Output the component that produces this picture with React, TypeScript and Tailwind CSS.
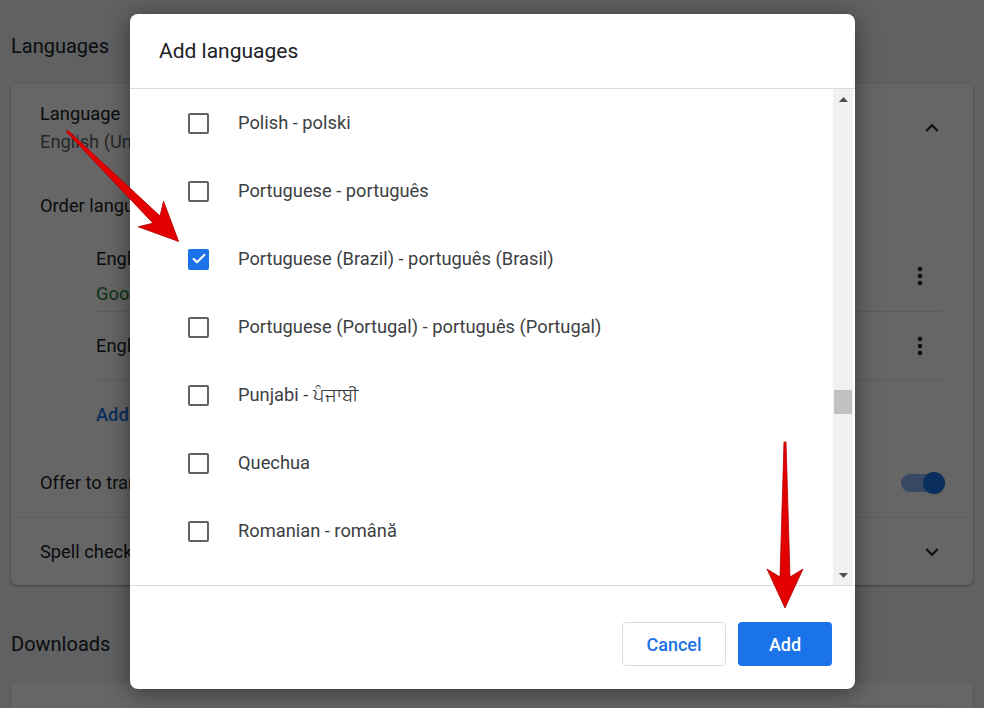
import { Check } from 'lucide-react';

const LANGS = [
  { label: 'Polish - polski', checked: false },
  { label: 'Portuguese - português', checked: false },
  { label: 'Portuguese (Brazil) - português (Brasil)', checked: true },
  { label: 'Portuguese (Portugal) - português (Portugal)', checked: false },
  { label: 'Punjabi - ਪੰਜਾਬੀ', checked: false },
  { label: 'Quechua', checked: false },
  { label: 'Romanian - română', checked: false },
];

function ChevronUp() {
  return (
    <svg width="26" height="26" viewBox="0 0 24 24" fill="#202124">
      <path d="M12 8l-6 6 1.41 1.41L12 10.83l4.59 4.58L18 14z" />
    </svg>
  );
}

function ChevronDown() {
  return (
    <svg width="26" height="26" viewBox="0 0 24 24" fill="#202124">
      <path d="M16.59 8.59L12 13.17 7.41 8.59 6 10l6 6 6-6z" />
    </svg>
  );
}

function MoreVert() {
  return (
    <svg width="28" height="28" viewBox="0 0 24 24" fill="#202124">
      <circle cx="12" cy="6" r="2" />
      <circle cx="12" cy="12" r="2" />
      <circle cx="12" cy="18" r="2" />
    </svg>
  );
}

function Checkbox({ checked }: { checked: boolean }) {
  if (checked) {
    return (
      <div className="w-[21px] h-[21px] rounded-[2px] bg-[#1a73e8] flex items-center justify-center shrink-0">
        <Check size={16} strokeWidth={3.2} className="text-white" />
      </div>
    );
  }
  return <div className="w-[21px] h-[21px] rounded-[2px] border-2 border-[#5f6368] shrink-0" />;
}

function SettingsPage() {
  return (
    <div className="px-[11px]">
      <div className="h-[84px] pt-[33px] text-[20px] leading-[26px] text-[#202124]">Languages</div>

      <div className="rounded-[6px] bg-white shadow-[0_1px_2px_rgba(60,64,67,0.3),0_1px_3px_1px_rgba(60,64,67,0.15)] text-[18.3px] text-[#202124]">
        <div className="h-[88px] flex items-center justify-between pl-[29px] pr-[28px]">
          <div className="leading-[28px]">
            <div>Language</div>
            <div className="text-[#5f6368]">English (United States)</div>
          </div>
          <ChevronUp />
        </div>

        <div className="h-[68px] flex items-center pl-[29px]">Order languages based on your preference</div>

        <div className="ml-[85px] mr-[30px]">
          <div className="h-[71px] flex items-center justify-between pr-[9px]">
            <div className="leading-[35px]">
              <div>English (United States)</div>
              <div className="text-[#188038]">Google Chrome is displayed in this language</div>
            </div>
            <MoreVert />
          </div>
          <div className="h-[69px] flex items-center justify-between pr-[9px] border-t border-[#e8eaed]">
            <div>English</div>
            <MoreVert />
          </div>
          <div className="h-[68px] flex items-center border-t border-[#e8eaed] text-[#1a73e8] font-medium">
            Add languages
          </div>
        </div>

        <div className="h-[69px] flex items-center justify-between pl-[29px] pr-[28px]">
          <div>Offer to translate pages that aren't in a language you read</div>
          <div className="w-[44px] h-[18px] rounded-full bg-[#8ab4f8] flex items-center justify-end">
            <div className="w-[22px] h-[22px] rounded-full bg-[#1a73e8] shadow" />
          </div>
        </div>

        <div className="h-[68px] flex items-center justify-between pl-[29px] pr-[28px] border-t border-[#e8eaed]">
          <div>Spell check</div>
          <ChevronDown />
        </div>
      </div>

      <div className="h-[98px] pt-[46px] text-[20px] leading-[26px] text-[#202124]">Downloads</div>

      <div className="h-[120px] rounded-[6px] bg-white shadow-[0_1px_2px_rgba(60,64,67,0.3)] flex items-start justify-between pl-[29px] pr-[30px] pt-[22px] text-[18.3px] text-[#202124]">
        <div className="pt-[4px]">Location</div>
        <div className="w-[108px] h-[40px] rounded-[4px] border border-[#dadce0] flex items-center justify-center text-[#1a73e8] font-medium">
          Change
        </div>
      </div>
    </div>
  );
}

function ScrollArrow({ up }: { up: boolean }) {
  return (
    <div className="h-[20px] flex items-center justify-center">
      <svg width="9" height="5" viewBox="0 0 9 5" fill="#505050">
        {up ? <path d="M0 5 L4.5 0 L9 5 Z" /> : <path d="M0 0 L9 0 L4.5 5 Z" />}
      </svg>
    </div>
  );
}

function AddLanguagesDialog() {
  return (
    <div className="absolute left-[130px] top-[14px] w-[725px] h-[675px] rounded-[8px] bg-white flex flex-col overflow-hidden shadow-[0_4px_24px_rgba(0,0,0,0.45)]">
      <div className="h-[75px] shrink-0 flex items-center pl-[29px] pt-[2px] border-b border-[#dadce0] text-[21px] text-[#202124]">
        Add languages
      </div>

      <div className="h-[496px] shrink-0 flex pr-[2px]">
        <div className="flex-1 overflow-hidden">
          {LANGS.map((lang) => (
            <div key={lang.label} className="h-[68px] flex items-center pl-[58px] gap-[29px]">
              <Checkbox checked={lang.checked} />
              <span className="text-[18.3px] text-[#3c4043]">{lang.label}</span>
            </div>
          ))}
        </div>
        <div className="w-[20px] bg-[#f1f1f1] flex flex-col">
          <ScrollArrow up />
          <div className="h-[281px]" />
          <div className="h-[24px] mx-[1px] bg-[#c1c1c1]" />
          <div className="flex-1" />
          <ScrollArrow up={false} />
        </div>
      </div>

      <div className="flex-1 border-t border-[#dadce0] flex justify-end items-start pt-[36px] pr-[23px] gap-[12px]">
        <button className="w-[104px] h-[44px] rounded-[4px] border border-[#dadce0] bg-white text-[18px] font-medium text-[#1a73e8]">
          Cancel
        </button>
        <button className="w-[94px] h-[44px] rounded-[4px] bg-[#1a73e8] text-[18px] font-medium text-white">
          Add
        </button>
      </div>
    </div>
  );
}

function Arrow({ x, y, angle, length }: { x: number; y: number; angle: number; length: number }) {
  const L = length;
  const d = `M0 -1 L${L - 31} -5 L${L - 39} -18 L${L} 0 L${L - 39} 18 L${L - 31} 5 L0 1 Z`;
  return (
    <g transform={`translate(${x} ${y}) rotate(${angle})`}>
      <path d={d} fill="#e30000" stroke="#b30000" strokeWidth="0.8" strokeLinejoin="round" />
    </g>
  );
}

export default function App() {
  return (
    <div
      className="relative w-[984px] h-[708px] overflow-hidden bg-[#f1f3f4]"
      style={{ fontFamily: 'Roboto, "Noto Sans", "Liberation Sans", sans-serif' }}
    >
      <SettingsPage />

      {/* modal scrim */}
      <div className="absolute inset-0 bg-black/60" />

      <AddLanguagesDialog />

      {/* red annotation arrows */}
      <svg className="absolute inset-0 pointer-events-none" width="984" height="708" viewBox="0 0 984 708">
        <Arrow x={67} y={131} angle={44.7} length={157} />
        <Arrow x={785} y={442} angle={90} length={166} />
      </svg>
    </div>
  );
}
